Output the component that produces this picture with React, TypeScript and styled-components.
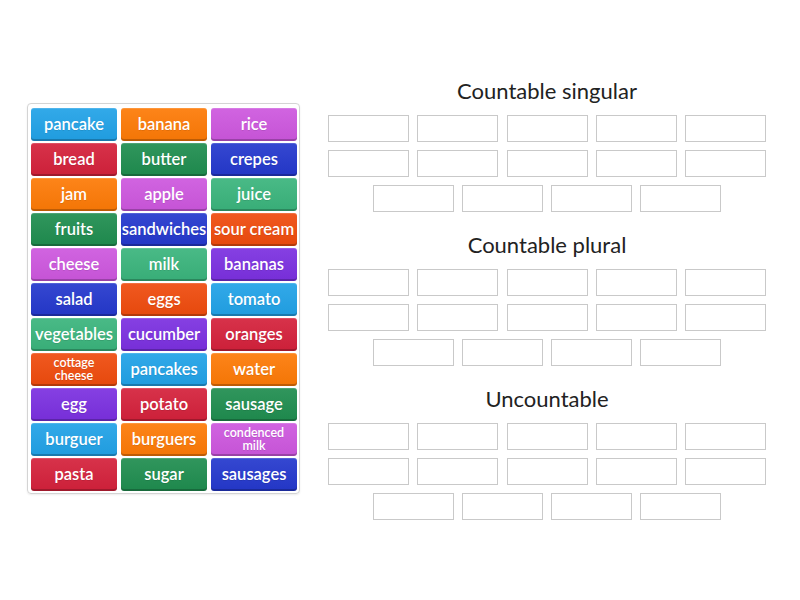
import React from "react";
import styled, { createGlobalStyle } from "styled-components";

const GlobalStyle = createGlobalStyle`
  html, body { margin: 0; padding: 0; background: #ffffff; }
  body { font-family: Lato, "Open Sans", sans-serif; }
`;

const colors: Record<string, string> = {
  blue: "#21a2e7",
  orange: "#fd7a06",
  pink: "#cd57de",
  red: "#d4213b",
  green: "#1f8d4f",
  navy: "#2438cd",
  teal: "#3ab47c",
  redorange: "#ef4b0d",
  violet: "#7b30e0",
};

type Item = { label: string; color: string; small?: boolean };

const items: Item[] = [
  { label: "pancake", color: "blue" },
  { label: "banana", color: "orange" },
  { label: "rice", color: "pink" },
  { label: "bread", color: "red" },
  { label: "butter", color: "green" },
  { label: "crepes", color: "navy" },
  { label: "jam", color: "orange" },
  { label: "apple", color: "pink" },
  { label: "juice", color: "teal" },
  { label: "fruits", color: "green" },
  { label: "sandwiches", color: "navy" },
  { label: "sour cream", color: "redorange" },
  { label: "cheese", color: "pink" },
  { label: "milk", color: "teal" },
  { label: "bananas", color: "violet" },
  { label: "salad", color: "navy" },
  { label: "eggs", color: "redorange" },
  { label: "tomato", color: "blue" },
  { label: "vegetables", color: "teal" },
  { label: "cucumber", color: "violet" },
  { label: "oranges", color: "red" },
  { label: "cottage cheese", color: "redorange", small: true },
  { label: "pancakes", color: "blue" },
  { label: "water", color: "orange" },
  { label: "egg", color: "violet" },
  { label: "potato", color: "red" },
  { label: "sausage", color: "green" },
  { label: "burguer", color: "blue" },
  { label: "burguers", color: "orange" },
  { label: "condenced milk", color: "pink", small: true },
  { label: "pasta", color: "red" },
  { label: "sugar", color: "green" },
  { label: "sausages", color: "navy" },
];

const Page = styled.div`
  display: flex;
  align-items: flex-start;
  padding-left: 27px;
  width: 800px;
  height: 600px;
  box-sizing: border-box;
`;

const Bank = styled.div`
  margin-top: 103px;
  width: 273px;
  box-sizing: border-box;
  border: 1px solid #d4d4d4;
  border-radius: 4px;
  padding: 4px 3px 2px 3px;
  display: grid;
  grid-template-columns: repeat(3, 86px);
  grid-auto-rows: 33px;
  column-gap: 4px;
  row-gap: 2px;
  box-shadow: 0 1px 2px rgba(0, 0, 0, 0.08);
`;

const Tile = styled.div<{ $bg: string; $small?: boolean }>`
  background: linear-gradient(to bottom, rgba(255,255,255,0.08), rgba(0,0,0,0.04)), ${(p) => p.$bg};
  border-radius: 3px;
  box-shadow: inset 0 -2px 0 rgba(0, 0, 0, 0.22), inset 0 1px 0 rgba(255,255,255,0.15);
  color: #ffffff;
  display: flex;
  align-items: center;
  justify-content: center;
  text-align: center;
  font-family: Lato, "Open Sans", sans-serif;
  font-weight: 600;
  font-size: ${(p) => (p.$small ? "12.5px" : "16.5px")};
  line-height: ${(p) => (p.$small ? "13px" : "18px")};
  padding: ${(p) => (p.$small ? "0 6px 2px" : "0 0 2px")};
  white-space: ${(p) => (p.$small ? "normal" : "nowrap")};
  text-shadow: 0 1px 0 rgba(0, 0, 0, 0.1);
`;

const Targets = styled.div`
  margin-left: 27px;
  width: 440px;
  padding-top: 78px;
  display: flex;
  flex-direction: column;
  gap: 20px;
`;

const Section = styled.div`
  display: flex;
  flex-direction: column;
  align-items: center;
`;

const Title = styled.div`
  font-family: Lato, "Open Sans", sans-serif;
  font-weight: 400;
  font-size: 22px;
  line-height: 26px;
  color: #222222;
  margin-bottom: 11px;
`;

const Slots = styled.div`
  display: flex;
  flex-wrap: wrap;
  justify-content: center;
  column-gap: 8.25px;
  row-gap: 8px;
  width: 440px;
`;

const Slot = styled.div`
  width: 81px;
  height: 27px;
  box-sizing: border-box;
  border: 1px solid #c9c9c9;
  background: #ffffff;
`;

const groups = ["Countable singular", "Countable plural", "Uncountable"];

export default function App() {
  return (
    <>
      <GlobalStyle />
      <Page>
        <Bank>
          {items.map((it, i) => (
            <Tile key={i} $bg={colors[it.color]} $small={it.small}>
              {it.label}
            </Tile>
          ))}
        </Bank>
        <Targets>
          {groups.map((g) => (
            <Section key={g}>
              <Title>{g}</Title>
              <Slots>
                {Array.from({ length: 14 }).map((_, i) => (
                  <Slot key={i} />
                ))}
              </Slots>
            </Section>
          ))}
        </Targets>
      </Page>
    </>
  );
}
